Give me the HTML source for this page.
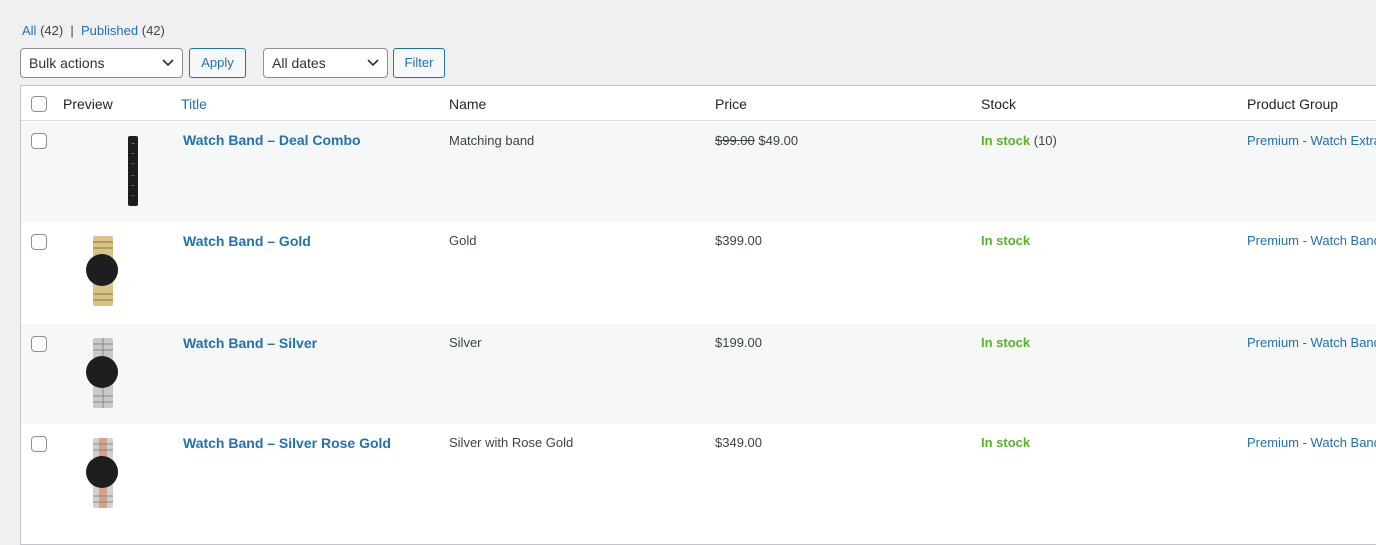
<!DOCTYPE html>
<html><head><meta charset="utf-8"><style>
*{margin:0;padding:0;box-sizing:border-box}
body{width:1376px;height:527px;overflow:hidden;background:#f0f0f1;font-family:"Liberation Sans",sans-serif;font-size:13px;color:#3c434a;position:relative}
.a{position:absolute;white-space:nowrap}
a,.l{color:#2271b1;text-decoration:none}
.sel{position:absolute;height:30px;border:1px solid #8c8f94;border-radius:4px;background:#fff;font-size:14px;color:#2c3338;padding:6px 8px;line-height:16px}
.sel svg{position:absolute;right:8px;top:10px}
.btn{position:absolute;height:30px;border:1px solid #2271b1;border-radius:3px;background:#f6f7f7;color:#2271b1;font-size:13px;line-height:28px;text-align:center}
.tbl{position:absolute;left:20px;top:85px;width:1380px;height:460px;border:1px solid #c3c4c7;background:#fff}
.row{position:absolute;left:21px;width:1360px}
.cb{position:absolute;left:31px;width:16px;height:16px;border:1px solid #8c8f94;border-radius:4px;background:#fff}
.t{font-weight:bold;font-size:14px}
.g{color:#5ab227;font-weight:bold}
</style></head><body>
<div class="a" style="left:22px;top:23px"><span class="l">All</span> (42) &nbsp;|&nbsp; <span class="l">Published</span> (42)</div>
<div class="sel" style="left:20px;top:48px;width:163px">Bulk actions<svg width="12" height="8"><path d="M1 1l5 5 5-5" stroke="#2c3338" stroke-width="1.6" fill="none"/></svg></div>
<div class="btn" style="left:189px;top:48px;width:57px">Apply</div>
<div class="sel" style="left:263px;top:48px;width:125px">All dates<svg width="12" height="8"><path d="M1 1l5 5 5-5" stroke="#2c3338" stroke-width="1.6" fill="none"/></svg></div>
<div class="btn" style="left:393px;top:48px;width:52px">Filter</div>
<div class="tbl"></div>
<div class="row" style="top:86px;height:35px;border-bottom:1px solid #dcdcde;background:#fff"></div>
<div class="row" style="top:122px;height:100px;background:#f6f7f7"></div>
<div class="row" style="top:324px;height:100px;background:#f6f7f7"></div>
<div class="cb" style="top:96px"></div>
<div class="a" style="left:63px;top:96px;font-size:14px;color:#1d2327">Preview</div>
<div class="a l" style="left:181px;top:96px;font-size:14px">Title</div>
<div class="a" style="left:449px;top:96px;font-size:14px;color:#1d2327">Name</div>
<div class="a" style="left:715px;top:96px;font-size:14px;color:#1d2327">Price</div>
<div class="a" style="left:981px;top:96px;font-size:14px;color:#1d2327">Stock</div>
<div class="a" style="left:1247px;top:96px;font-size:14px;color:#1d2327">Product Group</div>

<!-- row1 -->
<div class="cb" style="top:133px"></div>
<svg class="a" style="left:126px;top:135px" width="14" height="72"><rect x="2" y="1" width="10" height="70" rx="2" fill="#1d1d1d"/><g fill="#555"><rect x="5" y="8" width="4" height="1"/><rect x="5" y="18" width="4" height="1"/><rect x="5" y="28" width="4" height="1"/><rect x="5" y="40" width="4" height="1"/><rect x="5" y="50" width="4" height="1"/><rect x="5" y="60" width="4" height="1"/></g></svg>
<div class="a l t" style="left:183px;top:132px">Watch Band – Deal Combo</div>
<div class="a" style="left:449px;top:133px">Matching band</div>
<div class="a" style="left:715px;top:133px"><s>$99.00</s> $49.00</div>
<div class="a" style="left:981px;top:133px"><span class="g">In stock</span> (10)</div>
<div class="a l" style="left:1247px;top:133px">Premium - Watch Extras</div>

<!-- watches -->
<svg class="a" style="left:84px;top:236px" width="38" height="70"><rect x="9" y="0" width="20" height="70" rx="2" fill="#d8c487"/><g stroke="#8a7440" stroke-width="1"><path d="M9 6h20M9 12h20M9 58h20M9 64h20"/></g><rect x="30" y="30" width="4" height="8" fill="#d8c487"/><circle cx="18" cy="34" r="16" fill="#1e1e1e"/></svg>
<svg class="a" style="left:84px;top:338px" width="38" height="70"><rect x="9" y="0" width="20" height="70" rx="2" fill="#c9c9c9"/><g stroke="#888" stroke-width="1"><path d="M9 6h20M9 12h20M9 58h20M9 64h20M19 0v70"/></g><rect x="30" y="30" width="4" height="8" fill="#c9c9c9"/><circle cx="18" cy="34" r="16" fill="#1e1e1e"/></svg>
<svg class="a" style="left:84px;top:438px" width="38" height="70"><rect x="9" y="0" width="20" height="70" rx="2" fill="#d0d0d0"/><rect x="15" y="0" width="8" height="70" fill="#d9a088"/><g stroke="#888" stroke-width="1"><path d="M9 6h20M9 12h20M9 58h20M9 64h20"/></g><rect x="30" y="30" width="4" height="8" fill="#d9a088"/><circle cx="18" cy="34" r="16" fill="#1e1e1e"/></svg>

<!-- row2 -->
<div class="cb" style="top:234px"></div>
<div class="a l t" style="left:183px;top:233px">Watch Band – Gold</div>
<div class="a" style="left:449px;top:233px">Gold</div>
<div class="a" style="left:715px;top:233px">$399.00</div>
<div class="a g" style="left:981px;top:233px">In stock</div>
<div class="a l" style="left:1247px;top:233px">Premium - Watch Bands</div>
<!-- row3 -->
<div class="cb" style="top:336px"></div>
<div class="a l t" style="left:183px;top:335px">Watch Band – Silver</div>
<div class="a" style="left:449px;top:335px">Silver</div>
<div class="a" style="left:715px;top:335px">$199.00</div>
<div class="a g" style="left:981px;top:335px">In stock</div>
<div class="a l" style="left:1247px;top:335px">Premium - Watch Bands</div>
<!-- row4 -->
<div class="cb" style="top:436px"></div>
<div class="a l t" style="left:183px;top:435px">Watch Band – Silver Rose Gold</div>
<div class="a" style="left:449px;top:435px">Silver with Rose Gold</div>
<div class="a" style="left:715px;top:435px">$349.00</div>
<div class="a g" style="left:981px;top:435px">In stock</div>
<div class="a l" style="left:1247px;top:435px">Premium - Watch Bands</div>
</body></html>
